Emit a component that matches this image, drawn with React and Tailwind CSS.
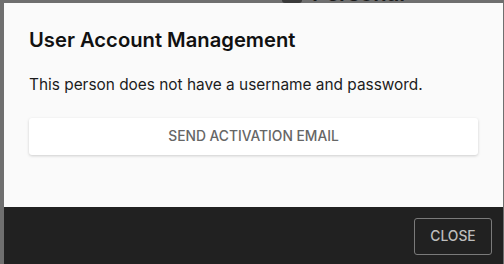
export default function App() {
  return (
    <div
      className="relative h-[264px] w-[504px] overflow-hidden bg-[#6f6f6f]"
      style={{ fontFamily: 'Inter, "Liberation Sans", sans-serif' }}
    >
      {/* page behind the overlay */}
      <div className="absolute left-[312px] top-[-20px] text-[22px] font-semibold leading-[26px] text-[#1a1a1a]">
        Personal Information
      </div>
      <div className="absolute left-[282px] top-0 h-[3px] w-[20px] rounded-b bg-[#3a3a3a]" />

      {/* modal */}
      <div className="absolute left-[4px] top-[3px] z-10 flex h-[261px] w-[499px] flex-col">
        <div className="flex h-[204px] flex-col bg-[#fafafa] px-[25px] pt-[24px]">
          <h2 className="text-[20.2px] font-semibold leading-[25px] text-[#111]">User Account Management</h2>
          <p className="mt-[23px] text-[15.4px] leading-[20px] text-[#1c1c1c]">
            This person does not have a username and password.
          </p>
          <button className="mt-[23px] h-[37px] w-[449px] rounded-[3px] bg-white text-[13.8px] font-medium text-[#666] shadow-[0_1px_3px_rgba(0,0,0,0.18)]">
            SEND ACTIVATION EMAIL
          </button>
        </div>
        <div className="flex flex-1 items-start justify-end bg-[#212121] pr-[11px] pt-[11px]">
          <button className="h-[37px] w-[78px] rounded-[3px] border border-[#7a7a7a] text-[13.8px] font-medium text-[#bdbdbd]">
            CLOSE
          </button>
        </div>
      </div>
    </div>
  );
}
